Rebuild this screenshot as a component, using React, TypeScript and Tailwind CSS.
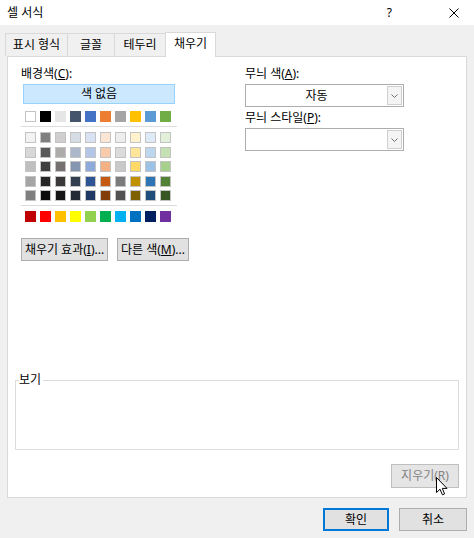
import React from 'react';

const themeRow = ['#ffffff', '#000000', '#e7e6e6', '#44546a', '#4472c4', '#ed7d31', '#a5a5a5', '#ffc000', '#5b9bd5', '#70ad47'];

const tintRows = [
  ['#f2f2f2', '#7f7f7f', '#d0cece', '#d6dce4', '#d9e2f3', '#fbe5d5', '#ededed', '#fff2cc', '#deebf6', '#e2efd9'],
  ['#d8d8d8', '#595959', '#aeabab', '#adb9ca', '#b4c6e7', '#f7cbac', '#dbdbdb', '#fee599', '#bdd7ee', '#c5e0b3'],
  ['#bfbfbf', '#3f3f3f', '#757070', '#8496b0', '#8eaadb', '#f4b183', '#c9c9c9', '#ffd965', '#9cc3e5', '#a8d08d'],
  ['#a5a5a5', '#262626', '#3a3838', '#323f4f', '#2f5496', '#c55a11', '#7b7b7b', '#bf9000', '#2e75b5', '#538135'],
  ['#7f7f7f', '#0c0c0c', '#171616', '#222a35', '#1f3864', '#833c0b', '#525252', '#7f6000', '#1e4e79', '#375623'],
];

const standardRow = ['#c00000', '#ff0000', '#ffc000', '#ffff00', '#92d050', '#00b050', '#00b0f0', '#0070c0', '#002060', '#7030a0'];

const Swatch = ({ color, framed }: { color: string; framed?: boolean }) => (
  <div
    className={`w-[11px] h-[11px] border ${framed ? 'border-[#c3c3c3]' : 'border-transparent'}`}
    style={{ backgroundColor: color }}
  />
);

const Combo = ({ value }: { value?: string }) => (
  <div className="flex h-[23px] w-[159px] border border-[#adadad] bg-white">
    <div className="flex-1 flex items-center justify-center text-[12px]">{value}</div>
    <div className="my-px mr-px w-[15px] border border-[#cfcfcf] bg-[#f4f4f4] flex items-center justify-center">
      <svg width="7" height="4" viewBox="0 0 7 4">
        <path d="M0.5 0.5 L3.5 3.5 L6.5 0.5" fill="none" stroke="#707070" strokeWidth="1" />
      </svg>
    </div>
  </div>
);

const Button = ({ children, className = '' }: { children: React.ReactNode; className?: string }) => (
  <div
    className={`h-[23px] flex items-center justify-center border border-[#adadad] bg-[#e1e1e1] text-[12px] ${className}`}
  >
    {children}
  </div>
);

const App = () => {
  const tabs = [
    { label: '표시 형식', w: 'w-[63px]' },
    { label: '글꼴', w: 'w-[48px]' },
    { label: '테두리', w: 'w-[52px]' },
  ];

  return (
    <div className="relative w-[474px] h-[538px] bg-[#f0f0f0] text-black font-['Noto_Sans','Noto_Sans_CJK_KR',sans-serif] select-none">
      {/* Title bar */}
      <div className="h-[25px] bg-white flex items-center pl-[7px] text-[12px]">
        <span>셀 서식</span>
        <span className="ml-auto mr-[57px] text-[12px]">?</span>
        <svg className="mr-[15px]" width="10" height="10" viewBox="0 0 10 10">
          <path d="M0.5 0.5 L9.5 9.5 M9.5 0.5 L0.5 9.5" stroke="#000" strokeWidth="1" />
        </svg>
      </div>

      {/* Tabs */}
      <div className="flex items-end pl-[5px] mt-[7px] h-[24px]">
        {tabs.map((t, i) => (
          <div
            key={t.label}
            className={`${t.w} h-[23px] ${i > 0 ? '-ml-px' : ''} border border-b-0 border-[#d9d9d9] bg-[#f0f0f0] flex items-center justify-center text-[12px]`}
          >
            {t.label}
          </div>
        ))}
        <div className="relative z-10 -ml-px w-[51px] h-[25px] -mb-px border border-b-0 border-[#d9d9d9] bg-white flex items-center justify-center text-[12px] pb-[2px]">
          채우기
        </div>
      </div>

      {/* Panel */}
      <div className="mx-[7px] h-[442px] border border-[#d9d9d9] bg-white flex flex-col">
        <div className="flex pl-[13px] pt-[9px]">
          {/* Left column */}
          <div className="w-[160px] flex flex-col">
            <div className="h-[16px] leading-[16px] text-[12px]">
              배경색(<u>C</u>):
            </div>
            <div className="mt-[2px] ml-[2px] w-[152px] h-[20px] border border-[#99d1ff] bg-[#cce8ff] flex items-center justify-center text-[12px]">
              색 없음
            </div>
            <div className="mt-[7px] ml-[4px] grid grid-cols-[repeat(10,11px)] gap-x-[4px]">
              {themeRow.map((c, i) => (
                <Swatch key={i} color={c} framed={i === 0} />
              ))}
            </div>
            <div className="mt-[4px] w-[156px] h-px bg-[#dcdcdc]" />
            <div className="mt-[5px] ml-[4px] grid grid-cols-[repeat(10,11px)] gap-x-[4px] gap-y-[3.5px]">
              {tintRows.flat().map((c, i) => (
                <Swatch key={i} color={c} framed />
              ))}
            </div>
            <div className="mt-[4px] w-[156px] h-px bg-[#dcdcdc]" />
            <div className="mt-[5px] ml-[4px] grid grid-cols-[repeat(10,11px)] gap-x-[4px]">
              {standardRow.map((c, i) => (
                <Swatch key={i} color={c} />
              ))}
            </div>
            <div className="mt-[16px] flex gap-[9px]">
              <Button className="w-[87px] shrink-0">
                채우기 효과(<u>I</u>)...
              </Button>
              <Button className="w-[72px] shrink-0">
                다른 색(<u>M</u>)...
              </Button>
            </div>
          </div>

          {/* Right column */}
          <div className="ml-[64px] flex flex-col">
            <div className="h-[16px] leading-[16px] text-[12px]">
              무늬 색(<u>A</u>):
            </div>
            <div className="mt-[2px]">
              <Combo value="자동" />
            </div>
            <div className="mt-[3px] h-[16px] leading-[16px] text-[12px]">
              무늬 스타일(<u>P</u>):
            </div>
            <div className="mt-[2px]">
              <Combo />
            </div>
          </div>
        </div>

        {/* Preview + clear */}
        <div className="mt-auto px-[7px] pb-[9px] flex flex-col">
          <div className="relative h-[70px] border border-[#dcdcdc]">
            <span className="absolute -top-[9px] left-[3px] bg-white pr-[2px] text-[12px] leading-[16px]">보기</span>
          </div>
          <div className="mt-[14px] self-end w-[68px] h-[24px] border border-[#bfbfbf] bg-[#e5e5e5] flex items-center justify-center text-[12px] text-[#838383]">
            지우기(R)
          </div>
        </div>
      </div>

      {/* Footer buttons */}
      <div className="flex justify-end gap-[10px] pr-[7px] pt-[10px]">
        <div className="w-[66px] h-[23px] border-2 border-[#0078d7] bg-[#e1e1e1] flex items-center justify-center text-[12px]">
          확인
        </div>
        <Button className="w-[68px]">취소</Button>
      </div>

      {/* Mouse cursor */}
      <svg className="absolute left-[436px] top-[477px]" width="12" height="19" viewBox="0 0 12 19">
        <path
          d="M0.5 0.5 L0.5 15.5 L4 12.2 L6.4 17.8 L8.6 16.9 L6.3 11.4 L11 11.4 Z"
          fill="#fff"
          stroke="#000"
          strokeWidth="1"
          strokeLinejoin="miter"
        />
      </svg>
    </div>
  );
};

export default App;
